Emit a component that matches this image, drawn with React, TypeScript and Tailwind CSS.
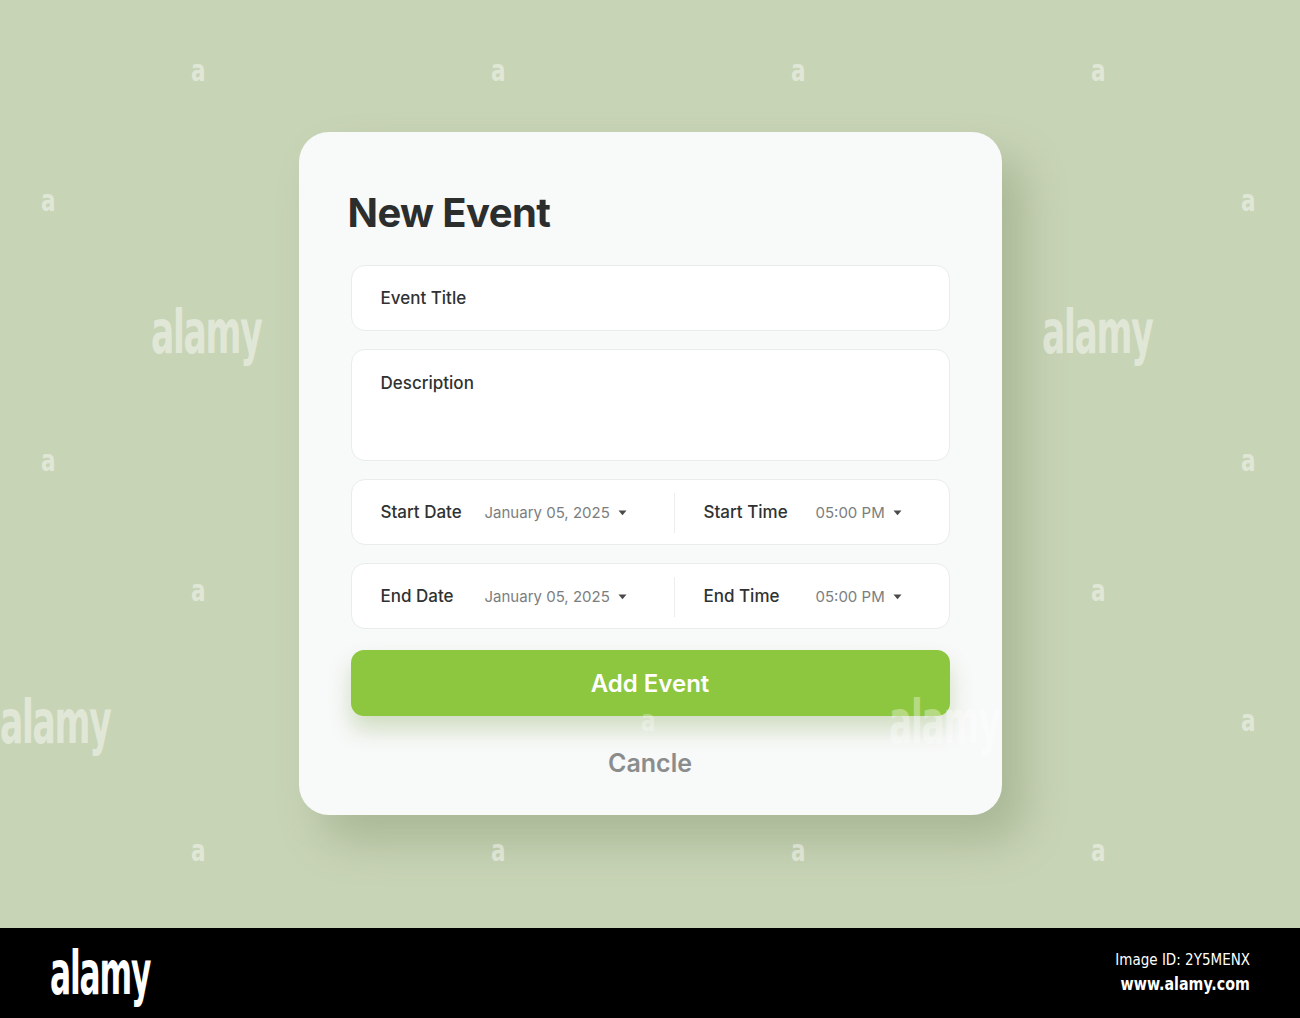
import React from "react";

const sans = { fontFamily: "Inter, 'Open Sans', sans-serif" };
const narrow = {
  fontFamily: "'Liberation Sans Narrow', 'DejaVu Sans Condensed', 'Liberation Sans', sans-serif",
};

function Caret() {
  return (
    <svg width="9" height="6" viewBox="0 0 9 6" className="ml-2 shrink-0">
      <path d="M0.5 0.5 H8.5 L4.5 5.2 Z" fill="#4a4a4a" />
    </svg>
  );
}

function PickerRow({
  dateLabel,
  date,
  timeLabel,
  time,
}: {
  dateLabel: string;
  date: string;
  timeLabel: string;
  time: string;
}) {
  return (
    <div className="flex h-[66px] items-center rounded-[14px] border border-[#e9ecec] bg-white pt-[2px]">
      <div className="flex w-[322px] items-center pl-[29px]">
        <span className="w-[104px] text-[17px] font-medium text-[#2f3232]">{dateLabel}</span>
        <span className="text-[15px] text-[#7b7e7e]">{date}</span>
        <Caret />
      </div>
      <div className="h-[40px] w-px bg-[#eceeee]" />
      <div className="flex items-center pl-[29px]">
        <span className="w-[112px] text-[17px] font-medium text-[#2f3232]">{timeLabel}</span>
        <span className="text-[15px] text-[#7b7e7e]">{time}</span>
        <Caret />
      </div>
    </div>
  );
}

// Faint stock watermarks layered over the scene
const marks: { x: number; y: number; big?: boolean; o?: number }[] = [
  { x: 191, y: 56 }, { x: 491, y: 56 }, { x: 791, y: 56 }, { x: 1091, y: 56 },
  { x: 41, y: 186 }, { x: 1241, y: 186 },
  { x: 151, y: 302, big: true }, { x: 1042, y: 302, big: true },
  { x: 41, y: 446 }, { x: 1241, y: 446 },
  { x: 191, y: 576 }, { x: 1091, y: 576 },
  { x: 0, y: 692, big: true }, { x: 1241, y: 706 },
  { x: 889, y: 692, big: true, o: 0.35 }, { x: 641, y: 706, o: 0.3 },
  { x: 191, y: 836 }, { x: 491, y: 836 }, { x: 791, y: 836 }, { x: 1091, y: 836 },
];

export default function App() {
  return (
    <div className="relative h-[1018px] w-[1300px] overflow-hidden bg-[#c8d4b6]" style={sans}>
      <div className="flex h-[928px] justify-center pt-[132px]">
        <div className="h-[683px] w-[703px] rounded-[30px] bg-[#f8f9f9] px-[52px] pt-[57px] shadow-[22px_26px_44px_rgba(90,110,70,0.28)]">
          <h1 className="-ml-[3px] text-[40px] font-bold leading-[48px] tracking-[-0.6px] text-[#2c2e2e]">
            New Event
          </h1>
          <div className="mt-[28px] flex flex-col gap-[18px]">
            <div className="flex h-[66px] items-center rounded-[14px] border border-[#e9ecec] bg-white pl-[29px] pt-[2px]">
              <span className="text-[17px] font-medium text-[#2f3232]">Event Title</span>
            </div>
            <div className="h-[112px] rounded-[14px] border border-[#e9ecec] bg-white pl-[29px] pt-[21px]">
              <span className="text-[17px] font-medium text-[#2f3232]">Description</span>
            </div>
            <PickerRow dateLabel="Start Date" date="January 05, 2025" timeLabel="Start Time" time="05:00 PM" />
            <PickerRow dateLabel="End Date" date="January 05, 2025" timeLabel="End Time" time="05:00 PM" />
          </div>
          <button className="mt-[21px] flex h-[66px] w-full items-center justify-center rounded-[13px] bg-[#8dc63f] pt-[1px] text-[24px] font-semibold text-white shadow-[0_14px_22px_rgba(120,160,70,0.3)]">
            Add Event
          </button>
          <div className="mt-[31px] text-center text-[25px] font-semibold leading-[32px] text-[#8b8d8d]">
            Cancle
          </div>
        </div>
      </div>

      <div className="flex h-[90px] items-center justify-between bg-black pl-[50px] pr-[50px]">
        <span className="text-[60px] font-bold leading-none tracking-[-2px] text-white" style={{ ...narrow, transform: "scaleX(0.58)", transformOrigin: "left" }}>
          alamy
        </span>
        <div className="flex flex-col items-end gap-[4px] text-white" style={narrow}>
          <span className="text-[15px] leading-[18px]">Image ID: 2Y5MENX</span>
          <span className="text-[18px] font-bold leading-[22px]" style={{ transform: "scaleX(0.88)", transformOrigin: "right" }}>
            www.alamy.com
          </span>
        </div>
      </div>

      {marks.map((m, i) => (
        <span
          key={i}
          className="pointer-events-none absolute font-bold leading-none text-white"
          style={{
            ...narrow,
            left: m.x,
            top: m.y,
            opacity: m.o ?? 0.45,
            fontSize: m.big ? 60 : 30,
            letterSpacing: m.big ? -2 : 0,
            transform: m.big ? "scaleX(0.64)" : "scaleX(0.8)",
            transformOrigin: "left",
          }}
        >
          {m.big ? "alamy" : "a"}
        </span>
      ))}
    </div>
  );
}
